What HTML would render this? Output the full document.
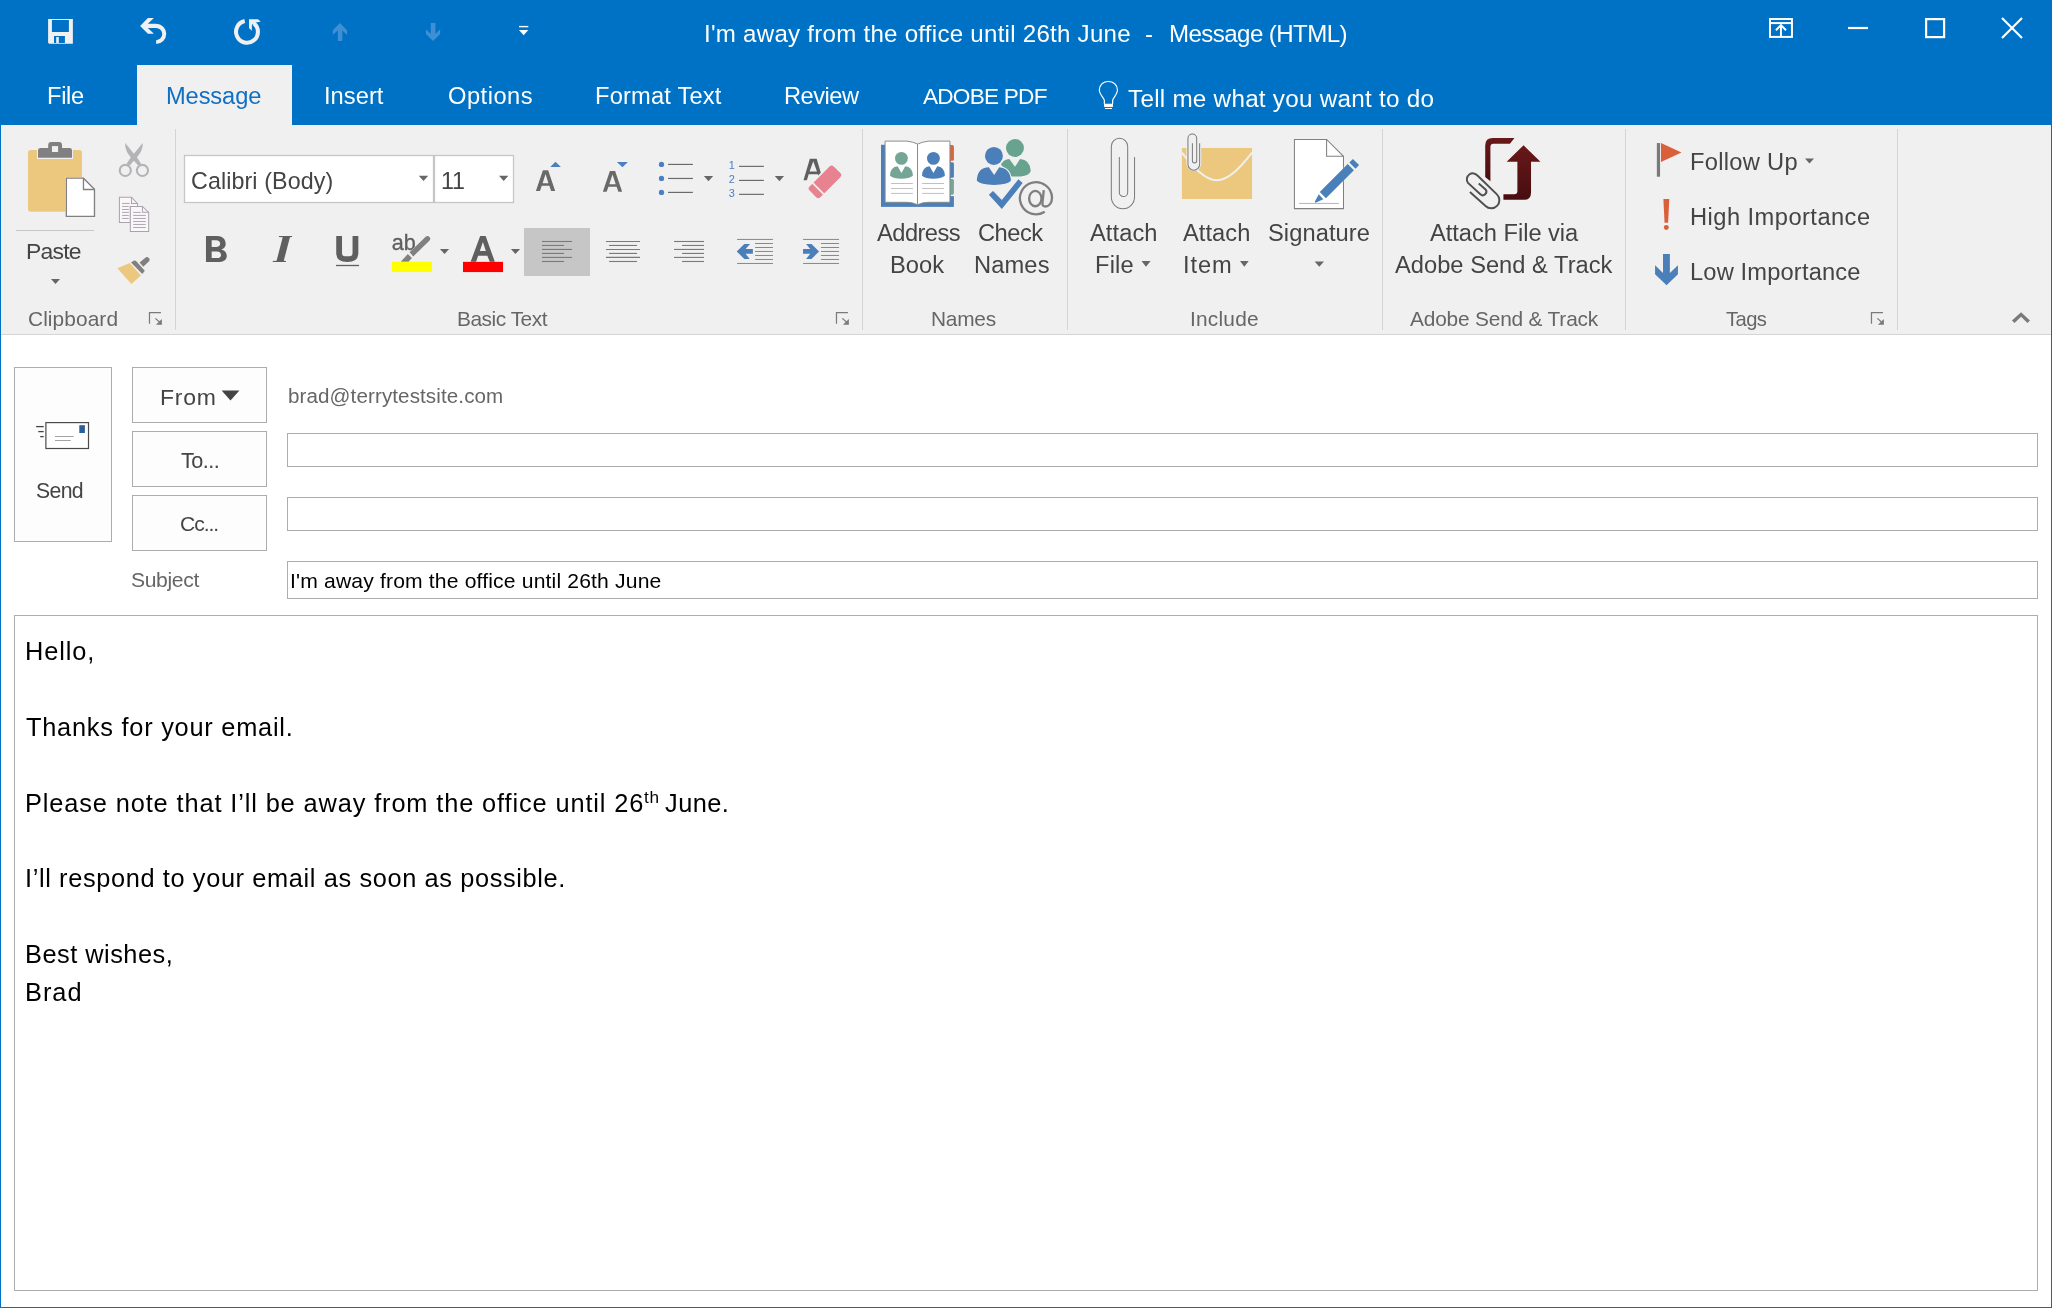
<!DOCTYPE html>
<html><head><meta charset="utf-8"><style>
*{margin:0;padding:0;box-sizing:border-box}
html,body{width:2052px;height:1308px;overflow:hidden;background:#fff;font-family:"Liberation Sans",sans-serif}
.t{position:absolute;white-space:nowrap;line-height:normal;will-change:transform}
.r{position:absolute}
</style></head><body>
<div class="r" style="left:0;top:0;width:2052px;height:125px;background:#0072c6"></div>
<div class="r" style="left:137px;top:65px;width:155px;height:60px;background:#f0f0f0"></div>
<div class="r" style="left:0;top:125px;width:2052px;height:209px;background:#f0f0f0"></div>
<div class="r" style="left:0;top:334px;width:2052px;height:1px;background:#d5d5d5"></div>
<div class="r" style="left:175px;top:129px;width:1px;height:201px;background:#d4d4d4"></div>
<div class="r" style="left:862px;top:129px;width:1px;height:201px;background:#d4d4d4"></div>
<div class="r" style="left:1067px;top:129px;width:1px;height:201px;background:#d4d4d4"></div>
<div class="r" style="left:1382px;top:129px;width:1px;height:201px;background:#d4d4d4"></div>
<div class="r" style="left:1625px;top:129px;width:1px;height:201px;background:#d4d4d4"></div>
<div class="r" style="left:1897px;top:129px;width:1px;height:201px;background:#d4d4d4"></div>
<div class="r" style="left:14px;top:367px;width:98px;height:175px;background:#fdfdfd;border:1.5px solid #adadad"></div>
<div class="r" style="left:132px;top:367px;width:135px;height:56px;background:#fdfdfd;border:1.5px solid #adadad"></div>
<div class="r" style="left:132px;top:431px;width:135px;height:56px;background:#fdfdfd;border:1.5px solid #adadad"></div>
<div class="r" style="left:132px;top:495px;width:135px;height:56px;background:#fdfdfd;border:1.5px solid #adadad"></div>
<div class="r" style="left:287px;top:433px;width:1751px;height:34px;border:1.5px solid #adadad"></div>
<div class="r" style="left:287px;top:497px;width:1751px;height:34px;border:1.5px solid #adadad"></div>
<div class="r" style="left:287px;top:561px;width:1751px;height:38px;border:1.5px solid #adadad"></div>
<div class="r" style="left:14px;top:615px;width:2024px;height:676px;border:1.5px solid #adadad"></div>
<div class="r" style="left:0;top:125px;width:1px;height:1183px;background:#0072c6"></div>
<div class="r" style="left:2050.5px;top:125px;width:1.5px;height:1183px;background:#0072c6"></div>
<div class="r" style="left:0;top:1306.5px;width:2052px;height:1.5px;background:#0072c6"></div>
<svg class="r" style="left:0;top:0;will-change:transform" width="2052" height="1308" viewBox="0 0 2052 1308"><g transform="translate(40,12) scale(0.030581)"><path fill="#f0f0f0" fill-rule="evenodd" d="M265,230 L1075,230 L1075,1040 L300,1040 L265,1005 Z M390,262 L390,655 L945,655 L945,262 Z M458,785 L458,1010 L530,1010 L530,820 L615,820 L615,1010 L815,1010 L815,785 Z"/></g><g transform="translate(132,12) scale(0.030581)"><path fill="#f0f0f0" d="M265,455 L520,195 L715,195 L520,385 L790,385 A325,325 0 0 1 790,1045 L790,920 A195,195 0 0 0 790,520 L520,520 L715,710 L520,710 Z"/></g><g transform="translate(227,12) scale(0.030581)"><path fill="none" stroke="#f0f0f0" stroke-width="132" d="M580,297 A358,358 0 1 0 880,370"/><path fill="#f0f0f0" d="M720,235 L1010,235 L1105,310 L945,340 L880,390 L815,410 L810,610 L720,520 Z"/></g><g transform="translate(310,5) scale(0.126711)"><path fill="#3f8fd5" d="M236,143 L292,200 L292,237 L255,200 L255,285 L220,285 L220,200 L180,237 L180,200 Z"/></g><g transform="translate(310,5) scale(0.126711)"><path fill="#3f8fd5" d="M971,285 L1027,228 L1027,191 L990,228 L990,143 L953,143 L953,228 L915,191 L915,228 Z"/></g><rect x="519" y="25.9" width="9.3" height="1.4" fill="#fff"/><path fill="#fff" d="M519,30 L528.3,30 L523.65,35.2 Z"/><g transform="translate(1760,10) scale(0.030581)"><g fill="none" stroke="#fff" stroke-width="65"><rect x="327" y="295" width="718" height="585"/><line x1="327" y1="428" x2="1045" y2="428"/><line x1="685" y1="490" x2="685" y2="880"/><polyline points="520,660 685,495 850,660"/></g></g><g stroke="#fff" stroke-width="2.2" fill="none"><line x1="1848" y1="28" x2="1868" y2="28"/><rect x="1926.1" y="19.1" width="18" height="18"/><line x1="2002" y1="18" x2="2022" y2="38"/><line x1="2022" y1="18" x2="2002" y2="38"/></g><g transform="translate(1090,75) scale(0.030581)"><path fill="none" stroke="#fff" stroke-width="38" d="M470,950 L470,830 C470,760 305,640 305,490 C305,320 440,212 600,212 C760,212 897,320 897,490 C897,640 740,760 740,830 L740,950"/><rect x="460" y="940" width="290" height="105" fill="#fff"/><rect x="490" y="1078" width="230" height="34" fill="#fff"/></g><g transform="translate(22,136) scale(0.061162)"><rect x="98" y="228" width="882" height="1012" rx="45" fill="#ecc87f"/><path fill="#f0f0f0" d="M245,185 L835,185 L835,378 L245,378 Z"/><path fill="#808080" d="M302,198 L428,198 L428,150 Q428,100 478,100 L605,100 Q655,100 655,150 L655,198 L778,198 Q818,198 818,238 L818,355 L262,355 L262,238 Q262,198 302,198 Z"/><rect x="490" y="165" width="100" height="97" fill="#f0f0f0"/><path fill="#f0f0f0" d="M705,670 L1015,670 L1205,860 L1205,1400 L705,1400 Z"/><path fill="#fff" stroke="#808080" stroke-width="22" d="M725,690 L1005,690 L1185,870 L1185,1314 L725,1314 Z"/><path fill="none" stroke="#808080" stroke-width="22" d="M1005,690 L1005,875 L1185,875"/></g><line x1="16" y1="230.5" x2="94" y2="230.5" stroke="#c6c6c6" stroke-width="1.2"/><path fill="#666" d="M51,279 L60,279 L55.5,284 Z"/><g transform="translate(112,138) scale(0.033639)"><path fill="#b4b3b6" d="M395,145 L650,470 L910,145 C930,300 850,450 740,570 L870,770 L780,820 L650,680 L530,820 L430,770 L560,570 C450,450 380,300 395,145 Z"/><circle cx="395" cy="965" r="165" fill="none" stroke="#b4b3b6" stroke-width="62"/><circle cx="905" cy="965" r="165" fill="none" stroke="#b4b3b6" stroke-width="62"/></g><g transform="translate(112,192) scale(0.033639)"><g stroke="#a7a5a9" stroke-width="30" fill="#faf6fa"><path d="M220,155 L580,155 L760,345 L760,430 L545,430 L545,905 L220,905 Z"/><path fill="none" d="M580,155 L580,345 L760,345"/><path d="M545,430 L905,430 L1090,605 L1090,1175 L545,1175 Z"/><path fill="none" d="M905,430 L905,605 L1090,605"/></g><g stroke="#a7a5a9" stroke-width="28"><line x1="300" y1="340" x2="530" y2="340"/><line x1="300" y1="430" x2="500" y2="430"/><line x1="300" y1="520" x2="500" y2="520"/><line x1="300" y1="607" x2="500" y2="607"/><line x1="300" y1="697" x2="500" y2="697"/><line x1="300" y1="787" x2="500" y2="787"/><line x1="628" y1="607" x2="855" y2="607"/><line x1="628" y1="697" x2="1005" y2="697"/><line x1="628" y1="787" x2="1005" y2="787"/><line x1="628" y1="877" x2="1005" y2="877"/><line x1="628" y1="965" x2="1005" y2="965"/><line x1="628" y1="1055" x2="1005" y2="1055"/></g></g><g transform="translate(112,250) scale(0.033639)"><path fill="#ecc87f" d="M160,540 L530,390 L860,755 L575,1010 Z"/><path fill="#808080" d="M565,370 L640,320 Q690,300 730,340 L975,620 L900,715 Z"/><path fill="#808080" d="M820,370 L1010,215 Q1060,195 1100,245 Q1135,290 1110,330 L930,500 Z"/></g><g transform="translate(140,300) scale(0.030581)"><g fill="none" stroke="#7a7a7a" stroke-width="40"><polyline points="685,410 310,410 310,780"/><line x1="500" y1="600" x2="640" y2="720"/></g><path fill="#7a7a7a" d="M520,810 L715,620 L715,810 Z"/></g><g transform="translate(827,300) scale(0.030581)"><g fill="none" stroke="#7a7a7a" stroke-width="40"><polyline points="685,410 310,410 310,780"/><line x1="500" y1="600" x2="640" y2="720"/></g><path fill="#7a7a7a" d="M520,810 L715,620 L715,810 Z"/></g><g transform="translate(1862,300) scale(0.030581)"><g fill="none" stroke="#7a7a7a" stroke-width="40"><polyline points="685,410 310,410 310,780"/><line x1="500" y1="600" x2="640" y2="720"/></g><path fill="#7a7a7a" d="M520,810 L715,620 L715,810 Z"/></g><g transform="translate(1996,296) scale(0.033639)"><path fill="#7a7a7a" d="M745,480 L1010,730 L935,800 L745,620 L550,800 L475,730 Z"/></g><rect x="184.5" y="155.5" width="249" height="47" fill="#fff" stroke="#c6c6c6" stroke-width="1.3"/><rect x="434.5" y="155.5" width="79" height="47" fill="#fff" stroke="#c6c6c6" stroke-width="1.3"/><path fill="#666" d="M418.8,175.7 L428.2,175.7 L423.5,181 Z M499,175.7 L508.4,175.7 L503.7,181 Z"/><g transform="translate(195,228) scale(0.087719)"><path fill="#5f5f5f" fill-rule="evenodd" d="M125,90 L250,90 C330,90 350,145 350,182 C350,215 330,235 300,245 C345,255 362,290 362,318 C362,362 325,388 258,388 L125,388 Z M190,140 L240,140 C270,140 287,155 287,178 C287,203 270,217 240,217 L190,217 Z M190,268 L250,268 C282,268 297,288 297,307 C297,327 282,343 250,343 L190,343 Z"/><path fill="#5f5f5f" d="M958,90 L1108,90 L1105,103 L1082,106 L1012,373 L1038,376 L1035,388 L885,388 L888,375 L930,373 L1000,106 L955,103 Z"/><path fill="none" stroke="#5f5f5f" stroke-width="66" d="M1643,90 L1643,285 C1643,350 1690,356 1736,356 C1782,356 1829,350 1829,285 L1829,90"/><rect x="1608" y="420" width="262" height="15" fill="#5f5f5f"/></g><g transform="translate(385,225) scale(0.068227)"><text x="100" y="362" font-family="Liberation Sans" font-size="335" fill="#5f5f5f" stroke="#5f5f5f" stroke-width="5" textLength="352" lengthAdjust="spacingAndGlyphs">ab</text><path fill="#f0f0f0" d="M270,470 L660,130 L720,200 L330,540 Z"/><path fill="#808080" d="M360,400 L600,170 Q630,150 655,180 Q675,205 650,230 L415,460 Z M335,425 L395,485 L345,540 L230,540 Z"/><rect x="100" y="540" width="590" height="150" fill="#ffff00"/><path fill="#666" d="M805,350 L940,350 L872,425 Z"/><path fill="#5f5f5f" fill-rule="evenodd" d="M1255,540 L1395,160 L1475,160 L1610,540 L1535,540 L1500,450 L1365,450 L1335,540 Z M1390,380 L1478,380 L1435,250 Z"/><rect x="1143" y="540" width="587" height="150" fill="#ff0000"/><path fill="#666" d="M1845,350 L1980,350 L1912,425 Z"/></g><g transform="translate(528,150) scale(0.058480)"><path fill="#696969" fill-rule="evenodd" d="M135,700 L255,345 L345,345 L465,700 L395,700 L365,612 L235,612 L205,700 Z M250,570 L350,570 L300,410 Z"/><path fill="#4a7fc1" d="M380,290 L470,200 L562,290 Z"/><path fill="#696969" fill-rule="evenodd" d="M1280,715 L1400,360 L1490,360 L1610,715 L1545,715 L1515,630 L1375,630 L1345,715 Z M1390,585 L1500,585 L1445,420 Z"/><path fill="#4a7fc1" d="M1520,205 L1708,205 L1615,295 Z"/></g><g transform="translate(650,150) scale(0.097466)"><g fill="#4a7fc1"><circle cx="118" cy="148" r="27"/><circle cx="118" cy="292" r="27"/><circle cx="118" cy="435" r="27"/></g><g stroke="#6a6a6a" stroke-width="12"><line x1="185" y1="148" x2="440" y2="148"/><line x1="185" y1="292" x2="440" y2="292"/><line x1="185" y1="435" x2="440" y2="435"/><line x1="913" y1="168" x2="1168" y2="168"/><line x1="913" y1="312" x2="1168" y2="312"/><line x1="913" y1="455" x2="1168" y2="455"/></g><path fill="#666" d="M553,268 L648,268 L600,320 Z M1280,268 L1375,268 L1328,320 Z"/><g fill="#4a7fc1" font-family="Liberation Sans" font-size="112"><text x="808" y="195">1</text><text x="808" y="340">2</text><text x="808" y="485">3</text></g><path fill="#5f5f5f" fill-rule="evenodd" d="M1575,310 L1640,90 L1710,90 L1775,310 L1740,310 L1722,250 L1628,250 L1610,310 Z M1637,220 L1713,220 L1675,115 Z"/><g transform="translate(1795,327) rotate(-45)"><rect x="-192" y="-96" width="384" height="192" rx="44" fill="#f0f0f0"/><rect x="-175" y="-78" width="350" height="156" rx="30" fill="#e7838f"/><rect x="-106" y="-90" width="18" height="180" fill="#f0f0f0"/></g></g><rect x="524" y="228" width="66" height="48" fill="#c6c6c6"/><g transform="translate(520,225) scale(0.092593)"><g stroke="#7a7a7a" stroke-width="12"><line x1="237" y1="178" x2="562" y2="178"/><line x1="237" y1="221" x2="475" y2="221"/><line x1="237" y1="264" x2="562" y2="264"/><line x1="237" y1="307" x2="475" y2="307"/><line x1="237" y1="350" x2="562" y2="350"/><line x1="237" y1="394" x2="475" y2="394"/><line x1="928" y1="178" x2="1296" y2="178"/><line x1="962" y1="221" x2="1264" y2="221"/><line x1="928" y1="264" x2="1296" y2="264"/><line x1="962" y1="307" x2="1264" y2="307"/><line x1="928" y1="350" x2="1296" y2="350"/><line x1="962" y1="394" x2="1264" y2="394"/><line x1="1663" y1="178" x2="1987" y2="178"/><line x1="1750" y1="221" x2="1987" y2="221"/><line x1="1663" y1="264" x2="1987" y2="264"/><line x1="1750" y1="307" x2="1987" y2="307"/><line x1="1663" y1="350" x2="1987" y2="350"/><line x1="1750" y1="394" x2="1987" y2="394"/></g></g><g transform="translate(725,225) scale(0.063351)"><g stroke="#7a7a7a" stroke-width="14"><line x1="190" y1="228" x2="757" y2="228"/><line x1="475" y1="292" x2="757" y2="292"/><line x1="475" y1="355" x2="757" y2="355"/><line x1="475" y1="418" x2="757" y2="418"/><line x1="475" y1="481" x2="757" y2="481"/><line x1="475" y1="544" x2="757" y2="544"/><line x1="190" y1="607" x2="757" y2="607"/><line x1="1232" y1="228" x2="1800" y2="228"/><line x1="1515" y1="292" x2="1800" y2="292"/><line x1="1515" y1="355" x2="1800" y2="355"/><line x1="1515" y1="418" x2="1800" y2="418"/><line x1="1515" y1="481" x2="1800" y2="481"/><line x1="1515" y1="544" x2="1800" y2="544"/><line x1="1232" y1="607" x2="1800" y2="607"/></g><path fill="#4a7fb9" d="M185,418 L305,300 L395,300 L325,380 L440,380 L440,455 L325,455 L390,535 L305,535 Z"/><path fill="#4a7fb9" d="M1232,380 L1345,380 L1280,300 L1365,300 L1485,418 L1365,535 L1280,535 L1345,455 L1232,455 Z"/></g><g transform="translate(875,135) scale(0.061162)"><rect x="98" y="160" width="1140" height="1015" fill="#4a7fba"/><path fill="#d9653f" d="M1200,165 L1265,165 Q1290,165 1290,190 L1290,395 Q1290,420 1265,420 L1200,420 Z"/><path fill="#4a7fba" d="M1200,445 L1265,445 Q1290,445 1290,470 L1290,675 Q1290,700 1265,700 L1200,700 Z"/><path fill="#75a695" d="M1200,720 L1265,720 Q1290,720 1290,745 L1290,950 Q1290,975 1265,975 L1200,975 Z"/><rect x="1200" y="1000" width="90" height="175" fill="#4a7fba"/><g fill="#fff" stroke="#8a8a8a" stroke-width="16"><path d="M165,100 L520,100 Q620,110 695,148 L695,1140 Q610,1100 520,1100 L165,1100 Z"/><path d="M695,148 Q780,110 880,100 L1225,100 L1225,1100 L880,1100 Q780,1100 695,1140 Z"/></g><circle cx="432" cy="382" r="105" fill="#75a695"/><path fill="#75a695" d="M245,665 Q250,520 370,510 L432,620 L495,510 Q615,520 620,665 Q560,715 432,715 Q300,715 245,665 Z"/><circle cx="955" cy="382" r="105" fill="#4a7fba"/><path fill="#4a7fba" d="M768,665 Q773,520 893,510 L955,620 L1018,510 Q1138,520 1143,665 Q1083,715 955,715 Q823,715 768,665 Z"/><g stroke="#a8a8a8" stroke-width="12"><line x1="262" y1="793" x2="620" y2="793"/><line x1="262" y1="875" x2="620" y2="875"/><line x1="262" y1="955" x2="620" y2="955"/><line x1="770" y1="793" x2="1128" y2="793"/><line x1="770" y1="875" x2="1128" y2="875"/><line x1="770" y1="955" x2="1128" y2="955"/></g></g><g transform="translate(970,135) scale(0.064986)"><circle cx="692" cy="200" r="138" fill="#68a390"/><path fill="#68a390" d="M475,455 Q520,372 605,370 L692,490 L770,370 Q925,380 935,555 Q915,625 780,640 L640,640 Z"/><circle cx="368" cy="322" r="150" fill="#f0f0f0"/><path fill="#f0f0f0" d="M95,715 Q100,480 290,480 L450,480 Q640,495 645,715 Q580,785 370,785 Q160,785 95,715 Z"/><circle cx="368" cy="322" r="138" fill="#4a7fba"/><path fill="#4a7fba" d="M105,705 Q110,500 290,495 L372,615 L450,495 Q620,510 630,705 Q580,765 370,768 Q160,765 105,705 Z"/><path fill="#4a7fba" d="M290,920 L355,860 L490,1000 L745,680 L810,740 L490,1140 Z"/><g fill="none" stroke="#7f7f7f" stroke-width="36"><path d="M1150,1180 A247,247 0 1 1 1262,960 C1262,1050 1215,1100 1160,1100 C1130,1100 1112,1085 1115,1050 L1135,850"/><ellipse cx="1005" cy="978" rx="95" ry="118"/></g></g><g transform="translate(1100,130) scale(0.077973)"><path fill="none" stroke="#7a7a7a" stroke-width="13" d="M443,345 L443,860 A149,149 0 0 1 145,860 L145,210 A105,105 0 0 1 355,210 L355,800 A53,53 0 0 1 248,800 L248,345"/><rect x="1050" y="230" width="900" height="655" fill="#ecc87f"/><path fill="none" stroke="#f0f0f0" stroke-width="26" d="M1050,290 C1200,480 1350,645 1497,645 C1650,645 1800,480 1950,290"/><path fill="#f0f0f0" stroke="#f0f0f0" stroke-width="40" d="M1128,105 A56,56 0 0 1 1240,105 L1278,170 L1278,430 A75,75 0 0 1 1128,430 Z"/><path fill="none" stroke="#7a7a7a" stroke-width="13" d="M1278,170 L1278,440 A75,75 0 0 1 1128,440 L1128,108 A56,56 0 0 1 1240,108 L1240,395 A27,27 0 0 1 1185,395 L1185,170"/></g><g transform="translate(1285,130) scale(0.064986)"><path fill="#fff" stroke="#808080" stroke-width="16" d="M145,145 L640,145 L900,405 L900,1210 L145,1210 Z"/><path fill="none" stroke="#808080" stroke-width="16" d="M640,145 L640,405 L900,405"/><line x1="218" y1="1130" x2="830" y2="1130" stroke="#a0a0a0" stroke-width="12"/><path fill="#f0f0f0" d="M905,560 L905,800 L1000,705 Z"/><path fill="#4a80b9" d="M535,955 L965,525 L1060,620 L630,1050 Z M990,500 L1045,445 L1140,540 L1085,595 Z M520,990 L590,1065 L470,1120 L458,1105 Z"/></g><defs><linearGradient id="mg" x1="0" y1="0" x2="0" y2="1"><stop offset="0" stop-color="#6a1818"/><stop offset="1" stop-color="#470d10"/></linearGradient></defs><g transform="translate(1455,130) scale(0.064986)"><path fill="url(#mg)" d="M545,790 L465,725 L465,240 Q465,125 580,125 L915,125 L845,210 L590,210 Q545,210 545,260 Z"/><path fill="url(#mg)" d="M745,990 L910,990 Q960,990 960,940 L960,490 L795,490 L1055,235 L1315,490 L1170,490 L1170,960 Q1170,1075 1060,1075 L745,1075 Z"/><path fill="none" stroke="#505050" stroke-width="30" d="M230,955 L470,1170 A125,125 0 0 0 645,990 L350,705 A85,85 0 0 0 200,815 L390,990 A55,55 0 0 0 470,915 L365,825"/></g><g transform="translate(1645,135) scale(0.118502)"><rect x="100" y="68" width="27" height="284" fill="#7a7a7a"/><path fill="#d9603b" d="M135,68 L308,148 L135,228 Z"/><path fill="#d9603b" d="M155,540 L205,540 L195,740 L165,740 Z"/><circle cx="180" cy="780" r="21" fill="#d9603b"/><path fill="#4a7fba" d="M152,1005 L210,1005 L210,1165 L278,1100 L278,1175 L182,1268 L85,1175 L85,1100 L152,1165 Z"/></g><path fill="#666" d="M1805,158.6 L1814,158.6 L1809.5,163.5 Z"/><path fill="#666" d="M1141.5,261 L1150.6,261 L1146,266.7 Z M1240,261 L1248.7,261 L1244.3,266.7 Z M1314.6,261.5 L1324,261.5 L1319.3,266.7 Z"/><rect x="45.9" y="422.6" width="42.6" height="25.9" fill="#fff" stroke="#4a4a4a" stroke-width="1.2"/><rect x="79.3" y="425.2" width="5.6" height="7.8" fill="#2a5f9a"/><g stroke="#999" stroke-width="0.9"><line x1="55" y1="436.5" x2="73.7" y2="436.5"/><line x1="55" y1="440.5" x2="70.8" y2="440.5"/></g><g stroke="#444" stroke-width="1.3"><line x1="36.1" y1="426.6" x2="43.7" y2="426.6"/><line x1="38.3" y1="431.6" x2="43.7" y2="431.6"/><line x1="40.2" y1="436.6" x2="43.7" y2="436.6"/></g><path fill="#444" d="M221.6,390.6 L239.4,390.6 L230.5,400.4 Z"/></svg><div class="t" style="left:703.80px;top:20.20px;font-size:24.109px;letter-spacing:0.2564px;color:#ffffff">I'm away from the office until 26th June</div><div class="t" style="left:1145.00px;top:20.20px;font-size:24.109px;letter-spacing:0.0000px;color:#ffffff">-</div><div class="t" style="left:1169.00px;top:20.30px;font-size:24.109px;letter-spacing:-0.5769px;color:#ffffff">Message (HTML)</div><div class="t" style="left:47.00px;top:83.00px;font-size:23.686px;letter-spacing:-0.3333px;color:#ffffff">File</div><div class="t" style="left:165.90px;top:83.00px;font-size:23.686px;letter-spacing:-0.1167px;color:#0f6fc3">Message</div><div class="t" style="left:324.20px;top:83.00px;font-size:23.686px;letter-spacing:0.0400px;color:#ffffff">Insert</div><div class="t" style="left:447.60px;top:83.00px;font-size:23.686px;letter-spacing:0.5000px;color:#ffffff">Options</div><div class="t" style="left:595.00px;top:83.00px;font-size:23.686px;letter-spacing:0.1900px;color:#ffffff">Format Text</div><div class="t" style="left:784.20px;top:83.00px;font-size:23.639px;letter-spacing:-0.4896px;color:#ffffff">Review</div><div class="t" style="left:923.40px;top:84.00px;font-size:22.606px;letter-spacing:-0.7619px;color:#ffffff">ADOBE PDF</div><div class="t" style="left:1128.40px;top:85.20px;font-size:24.250px;letter-spacing:0.2577px;color:#ffffff">Tell me what you want to do</div><div class="t" style="left:191.00px;top:168.00px;font-size:23.263px;letter-spacing:0.1077px;color:#444444">Calibri (Body)</div><div class="t" style="left:440.70px;top:168.00px;font-size:23.263px;letter-spacing:-0.1000px;color:#444444">11</div><div class="t" style="left:26.20px;top:238.30px;font-size:22.934px;letter-spacing:-0.7563px;color:#444444">Paste</div><div class="t" style="left:876.80px;top:220.40px;font-size:23.686px;letter-spacing:-0.5333px;color:#444444">Address</div><div class="t" style="left:890.30px;top:252.00px;font-size:23.686px;letter-spacing:0.0667px;color:#444444">Book</div><div class="t" style="left:978.30px;top:220.40px;font-size:23.686px;letter-spacing:-0.4750px;color:#444444">Check</div><div class="t" style="left:974.00px;top:252.00px;font-size:23.686px;letter-spacing:0.1250px;color:#444444">Names</div><div class="t" style="left:1089.90px;top:220.40px;font-size:23.686px;letter-spacing:0.0800px;color:#444444">Attach</div><div class="t" style="left:1095.00px;top:252.00px;font-size:23.686px;letter-spacing:0.1667px;color:#444444">File</div><div class="t" style="left:1183.40px;top:220.40px;font-size:23.686px;letter-spacing:0.0600px;color:#444444">Attach</div><div class="t" style="left:1183.00px;top:252.00px;font-size:23.686px;letter-spacing:0.9333px;color:#444444">Item</div><div class="t" style="left:1267.60px;top:220.40px;font-size:23.686px;letter-spacing:0.0750px;color:#444444">Signature</div><div class="t" style="left:1429.80px;top:220.20px;font-size:23.686px;letter-spacing:-0.0286px;color:#444444">Attach File via</div><div class="t" style="left:1395.40px;top:252.30px;font-size:23.686px;letter-spacing:0.0176px;color:#444444">Adobe Send &amp; Track</div><div class="t" style="left:1689.80px;top:149.10px;font-size:23.686px;letter-spacing:0.3000px;color:#444444">Follow Up</div><div class="t" style="left:1689.80px;top:203.80px;font-size:23.686px;letter-spacing:0.4571px;color:#444444">High Importance</div><div class="t" style="left:1689.80px;top:258.50px;font-size:23.686px;letter-spacing:0.1538px;color:#444444">Low Importance</div><div class="t" style="left:27.70px;top:307.00px;font-size:20.867px;letter-spacing:0.0875px;color:#666666">Clipboard</div><div class="t" style="left:457.20px;top:307.00px;font-size:20.867px;letter-spacing:-0.4667px;color:#666666">Basic Text</div><div class="t" style="left:931.00px;top:307.00px;font-size:20.867px;letter-spacing:-0.2500px;color:#666666">Names</div><div class="t" style="left:1190.40px;top:307.00px;font-size:20.867px;letter-spacing:0.2167px;color:#666666">Include</div><div class="t" style="left:1409.50px;top:307.00px;font-size:20.867px;letter-spacing:-0.1824px;color:#666666">Adobe Send &amp; Track</div><div class="t" style="left:1725.50px;top:308.00px;font-size:20.206px;letter-spacing:-0.5689px;color:#666666">Tags</div><div class="t" style="left:35.80px;top:479.40px;font-size:21.225px;letter-spacing:-0.6617px;color:#444444">Send</div><div class="t" style="left:160.40px;top:384.00px;font-size:22.981px;letter-spacing:0.7333px;color:#444444">From</div><div class="t" style="left:287.80px;top:384.10px;font-size:20.585px;letter-spacing:0.1048px;color:#666666">brad@terrytestsite.com</div><div class="t" style="left:180.70px;top:447.80px;font-size:21.635px;letter-spacing:-0.5500px;color:#444444">To...</div><div class="t" style="left:179.70px;top:512.40px;font-size:21.089px;letter-spacing:-1.0325px;color:#444444">Cc...</div><div class="t" style="left:131.40px;top:567.50px;font-size:21.149px;letter-spacing:-0.3667px;color:#666666">Subject</div><div class="t" style="left:290.00px;top:568.90px;font-size:21.149px;letter-spacing:0.1538px;color:#000">I'm away from the office until 26th June</div><div class="t" style="left:25.20px;top:637.00px;font-size:25.378px;letter-spacing:0.8800px;color:#000">Hello,</div><div class="t" style="left:25.70px;top:713.30px;font-size:25.378px;letter-spacing:0.7571px;color:#000">Thanks for your email.</div><div class="t" style="left:24.50px;top:788.60px;font-size:25.378px;letter-spacing:0.8774px;color:#000">Please note that I’ll be away from the office until 26</div><div class="t" style="left:643.90px;top:787.00px;font-size:17.201px;letter-spacing:0.8000px;color:#000">th</div><div class="t" style="left:665.20px;top:788.60px;font-size:25.378px;letter-spacing:0.4500px;color:#000">June.</div><div class="t" style="left:24.50px;top:863.70px;font-size:25.378px;letter-spacing:0.6239px;color:#000">I’ll respond to your email as soon as possible.</div><div class="t" style="left:24.50px;top:939.60px;font-size:25.378px;letter-spacing:0.4909px;color:#000">Best wishes,</div><div class="t" style="left:24.50px;top:977.50px;font-size:25.378px;letter-spacing:1.0000px;color:#000">Brad</div></body></html>
